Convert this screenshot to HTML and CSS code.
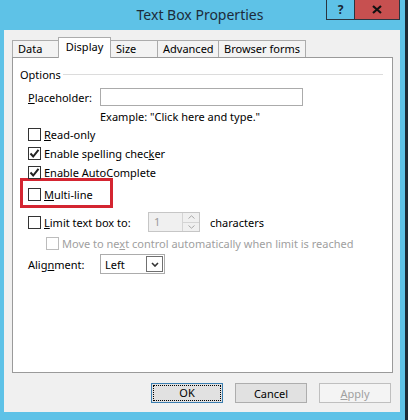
FILE: index.html
```html
<!DOCTYPE html>
<html lang="en">
  <head>
    <meta charset="UTF-8" />
    <title>Text Box Properties</title>
    <link rel="stylesheet" href="styles.css">
  </head>
  <body>
    <div class="window">
      <!-- Title bar -->
      <div class="titlebar">
        <span></span>
        <span class="title">Text Box Properties</span>
        <div class="caption-buttons">
          <span class="cap-btn help">?</span>
          <span class="cap-btn close">
            <svg width="10" height="9" viewBox="0 0 10 9">
              <path d="M1 1 L9 8 M9 1 L1 8" stroke="#111" stroke-width="2.2" fill="none" />
            </svg>
          </span>
        </div>
      </div>

      <div class="dialog">
        <div class="tabs">
          <span class="tab tab-data">Data</span>
          <span class="tab tab-display active">Display</span>
          <span class="tab tab-size">Size</span>
          <span class="tab tab-advanced">Advanced</span>
          <span class="tab tab-forms">Browser forms</span>
        </div>

        <div class="panel">
          <div class="group-title">Options</div>

          <div class="field-row">
            <label class="field-label"><u>P</u>laceholder:</label>
            <span class="textbox"></span>
          </div>
          <div class="hint">Example: "Click here and type."</div>

          <div class="check-row first">
            <span class="checkbox"></span>
            <span><u>R</u>ead-only</span>
          </div>
          <div class="check-row">
            <span class="checkbox checked">
              <svg width="11" height="11" viewBox="0 0 11 11">
                <path d="M1.5 5.5 L4.2 8.5 L9.5 1.8" stroke="#222" stroke-width="2" fill="none" />
              </svg>
            </span>
            <span>Enable spelling chec<u>k</u>er</span>
          </div>
          <div class="check-row">
            <span class="checkbox checked">
              <svg width="11" height="11" viewBox="0 0 11 11">
                <path d="M1.5 5.5 L4.2 8.5 L9.5 1.8" stroke="#222" stroke-width="2" fill="none" />
              </svg>
            </span>
            <span>Enable AutoComplete</span>
          </div>

          <div class="highlight">
            <span class="checkbox"></span>
            <span><u>M</u>ulti-line</span>
          </div>

          <div class="limit-row">
            <span class="checkbox"></span>
            <span class="limit-label"><u>L</u>imit text box to:</span>
            <span class="spinner">
              <span class="spin-value">1</span>
              <span class="spin-buttons">
                <span class="spin-btn">
                  <svg width="7" height="4" viewBox="0 0 7 4"><path d="M0.5 3.5 L3.5 0.8 L6.5 3.5" stroke="#a8a8a8" fill="none" /></svg>
                </span>
                <span class="spin-btn">
                  <svg width="7" height="4" viewBox="0 0 7 4"><path d="M0.5 0.5 L3.5 3.2 L6.5 0.5" stroke="#a8a8a8" fill="none" /></svg>
                </span>
              </span>
            </span>
            <span class="limit-unit">characters</span>
          </div>

          <div class="check-row sub disabled">
            <span class="checkbox"></span>
            <span>Move to ne<u>x</u>t control automatically when limit is reached</span>
          </div>

          <div class="field-row align-row">
            <label class="field-label">Alig<u>n</u>ment:</label>
            <span class="select">
              <span class="select-value">Left</span>
              <span class="select-btn">
                <svg width="8" height="5" viewBox="0 0 8 5"><path d="M1 1 L4 4 L7 1" stroke="#333" stroke-width="1.6" fill="none" /></svg>
              </span>
            </span>
          </div>
        </div>

        <div class="buttons">
          <button class="btn default"><span class="focus">OK</span></button>
          <button class="btn">Cancel</button>
          <button class="btn" disabled><u>A</u>pply</button>
        </div>
      </div>
    </div>
  </body>
</html>
```

FILE: styles.css
```css
/* Windows style dialog */
* {
  box-sizing: border-box;
}

body {
  margin: 0;
  font-family: "Noto Sans", sans-serif;
  font-size: 11px;
  color: #000;
  background-color: #5ec2e7;
}

.window {
  width: 408px;
  height: 420px;
  display: flex;
  flex-direction: column;
  background-color: #5ec2e7;
  border-right: 3px solid #1d2a35;
}

/* Title bar */
.titlebar {
  height: 30px;
  display: grid;
  grid-template-columns: 1fr auto 1fr;
  padding-right: 5px;
}

.title {
  font-size: 14px;
  color: #1c2b3a;
  line-height: 30px;
}

.caption-buttons {
  justify-self: end;
  display: flex;
  height: 20px;
}

.cap-btn {
  display: flex;
  align-items: center;
  justify-content: center;
  height: 20px;
  border: 1px solid #2a3540;
  border-top: none;
}

.help {
  width: 28px;
  font-weight: bold;
  font-size: 12px;
  color: #1a2530;
  border-right: none;
}

.close {
  width: 46px;
  background-color: #c75050;
}

/* Dialog body */
.dialog {
  flex: 1;
  margin: 0 5px 8px 4px;
  padding: 7px 7px 0 8px;
  background-color: #f0f0f0;
  display: flex;
  flex-direction: column;
}

.tabs {
  display: flex;
  align-items: flex-end;
  height: 20px;
}

.tab {
  height: 17px;
  line-height: 15px;
  border: 1px solid #acacac;
  border-bottom: none;
  background-color: #f3f3f3;
  padding: 0 5px;
  margin-left: -1px;
  text-align: center;
}

.tab-data {
  margin-left: 0;
  width: 47px;
  text-align: left;
}

.tab-display {
  width: 53px;
}

.tab-size {
  width: 48px;
  text-align: left;
}

.tab-advanced {
  width: 62px;
}

.tab-forms {
  width: 88px;
}

.tab.active {
  height: 21px;
  line-height: 17px;
  margin-bottom: -1px;
  background-color: #fff;
  position: relative;
  z-index: 1;
}

.panel {
  height: 316px;
  background-color: #fff;
  border: 1px solid #9a9a9a;
  padding: 0 9px 0 7px;
}

.group-title {
  display: flex;
  align-items: center;
  height: 14px;
  margin-top: 9px;
}

.group-title::after {
  content: "";
  flex: 1;
  border-top: 1px solid #dcdcdc;
  margin-left: 2px;
}

.field-row {
  display: flex;
  align-items: center;
  margin-top: 7px;
  padding-left: 8px;
  height: 18px;
}

.field-label {
  width: 72px;
}

.textbox {
  width: 203px;
  height: 18px;
  border: 1px solid #ababab;
  background-color: #fff;
}

.hint {
  margin-top: 4px;
  height: 14px;
  line-height: 14px;
  padding-left: 80px;
}

.check-row {
  display: flex;
  align-items: center;
  gap: 3px;
  height: 19px;
  padding-left: 8px;
}

.check-row.first {
  margin-top: 1px;
}

.checkbox {
  width: 13px;
  height: 13px;
  border: 1px solid #333;
  background-color: #fff;
  display: flex;
  align-items: center;
  justify-content: center;
  flex-shrink: 0;
}

.check-row.sub {
  padding-left: 26px;
  height: 18px;
  margin-top: 2px;
}

.disabled {
  color: #a0a0a0;
}

.disabled .checkbox {
  border-color: #bcbcbc;
}

/* Red annotation box around Multi-line */
.highlight {
  display: flex;
  align-items: center;
  gap: 3px;
  width: 93px;
  height: 30px;
  margin-top: -4px;
  padding: 2px 0 0 5px;
  border: 3px solid #d42531;
}

.limit-row {
  display: flex;
  align-items: center;
  height: 20px;
  margin-top: 4px;
  padding-left: 8px;
}

.limit-label {
  margin-left: 3px;
  width: 104px;
}

.spinner {
  display: flex;
  width: 52px;
  height: 20px;
  border: 1px solid #c6c6c6;
  background-color: #f0f0f0;
}

.spin-value {
  flex: 1;
  color: #9a9a9a;
  padding-left: 5px;
  line-height: 18px;
}

.spin-buttons {
  width: 17px;
  display: flex;
  flex-direction: column;
  border-left: 1px solid #d4d4d4;
}

.spin-btn {
  flex: 1;
  display: flex;
  align-items: center;
  justify-content: center;
}

.spin-btn + .spin-btn {
  border-top: 1px solid #d4d4d4;
}

.limit-unit {
  margin-left: 10px;
}

.align-row {
  margin-top: 2px;
  height: 20px;
}

.select {
  display: flex;
  align-items: center;
  justify-content: space-between;
  width: 65px;
  height: 20px;
  border: 1px solid #acacac;
  padding: 0 1px 0 4px;
}

.select-btn {
  width: 17px;
  height: 16px;
  border: 1px solid #707070;
  display: flex;
  align-items: center;
  justify-content: center;
}

/* Bottom buttons */
.buttons {
  display: flex;
  justify-content: flex-end;
  gap: 12px;
  margin-top: 10px;
  margin-right: 2px;
}

.btn {
  width: 72px;
  height: 20px;
  padding: 0;
  font-family: inherit;
  font-size: 11px;
  color: #000;
  background-color: #e1e1e1;
  border: 1px solid #adadad;
}

.btn.default {
  border-color: #3c7fb1;
  padding: 1px;
}

.btn .focus {
  display: block;
  height: 100%;
  line-height: 14px;
  border: 1px dotted #000;
}

.btn:disabled {
  background-color: #f4f4f4;
  border-color: #bfbfbf;
  color: #a0a0a0;
}
```
